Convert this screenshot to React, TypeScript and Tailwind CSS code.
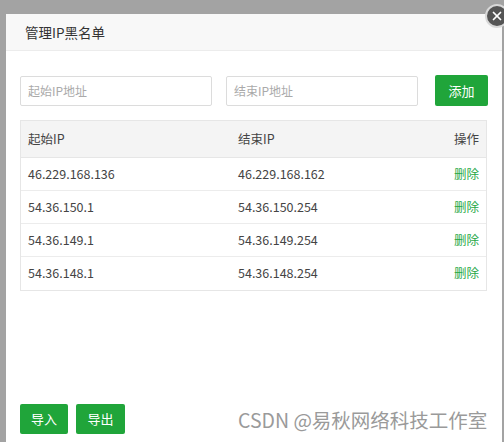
import { X } from "lucide-react";

type Rule = { start: string; end: string };

const RULES: Rule[] = [
  { start: "46.229.168.136", end: "46.229.168.162" },
  { start: "54.36.150.1", end: "54.36.150.254" },
  { start: "54.36.149.1", end: "54.36.149.254" },
  { start: "54.36.148.1", end: "54.36.148.254" },
];

const FONT = { fontFamily: '"Noto Sans CJK SC", "Noto Sans", sans-serif' };

export default function App() {
  return (
    <div
      className="relative h-[442px] w-[504px] overflow-hidden bg-[#a3a3a3] pl-[6px] pr-[2px] pt-[14px]"
      style={FONT}
    >
      {/* modal */}
      <div className="h-[460px] bg-white">
        <div className="flex h-[37px] items-center border-b border-[#ececec] bg-[#f8f8f8] px-[19px] text-[13.5px] text-[#333]">
          管理IP黑名单
        </div>

        <div className="px-[14px]">
          <div className="mt-[24px] flex items-center">
            <input
              placeholder="起始IP地址"
              className="h-[30px] w-[192px] rounded-[2px] border border-[#dcdcdc] px-[7px] text-[12px] text-[#333] outline-none placeholder:text-[#aaa]"
            />
            <input
              placeholder="结束IP地址"
              className="ml-[14px] h-[30px] w-[192px] rounded-[2px] border border-[#dcdcdc] px-[7px] text-[12px] text-[#333] outline-none placeholder:text-[#aaa]"
            />
            <button className="ml-[17px] h-[31px] w-[53px] rounded-[2px] bg-[#20a53a] text-[13px] text-white">
              添加
            </button>
          </div>

          <div className="mt-[14px] w-[467px] border border-[#e6e6e6] text-[12.5px] text-[#444]">
            <div className="grid h-[37px] grid-cols-[210px_1fr_auto] items-center border-b border-[#e6e6e6] bg-[#f4f4f4] px-[7px]">
              <span>起始IP</span>
              <span>结束IP</span>
              <span>操作</span>
            </div>
            {RULES.map((r, i) => (
              <div
                key={r.start}
                className={`grid h-[33px] grid-cols-[210px_1fr_auto] items-center px-[7px] ${
                  i < RULES.length - 1 ? "border-b border-[#ececec]" : ""
                }`}
              >
                <span>{r.start}</span>
                <span>{r.end}</span>
                <span className="text-[#26a845]">删除</span>
              </div>
            ))}
          </div>

          <div className="mt-[113px] flex gap-[8px]">
            <button className="h-[30px] w-[48px] rounded-[2px] bg-[#20a53a] text-[13px] text-white">
              导入
            </button>
            <button className="h-[30px] w-[49px] rounded-[2px] bg-[#20a53a] text-[13px] text-white">
              导出
            </button>
          </div>
        </div>
      </div>

      {/* close */}
      <div className="absolute left-[485px] top-[4px] flex h-[24px] w-[24px] items-center justify-center rounded-full border-2 border-[#d8d8d8] bg-[#555]">
        <X className="h-[14px] w-[14px] text-white" strokeWidth={3} />
      </div>

      {/* watermark */}
      <div className="absolute left-[238px] top-[410px] whitespace-nowrap text-[19.5px] leading-none text-[#9a9a9a]">
        CSDN @易秋网络科技工作室
      </div>
    </div>
  );
}
